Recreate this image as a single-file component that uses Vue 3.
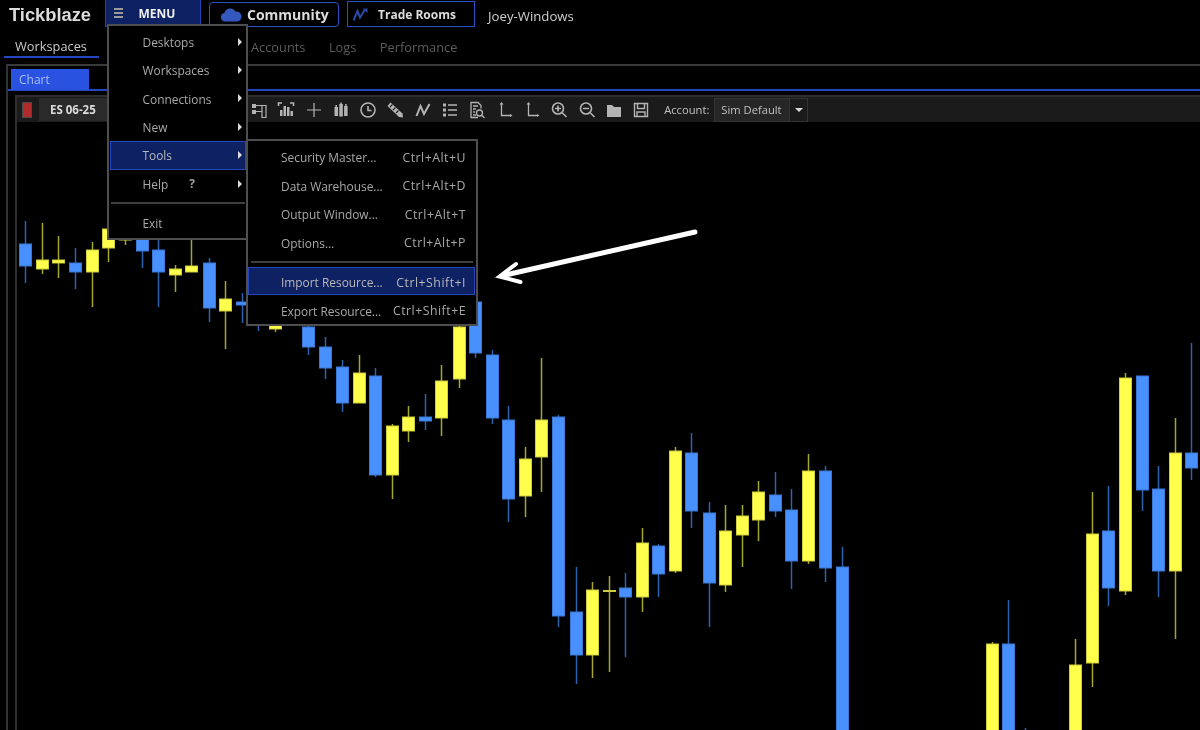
<script setup>
const B = 'b', Y = 'y'
const candles = [
  [25,221,283,244,266,B],[42,223,274,260,269,Y],[58,236,278,260,263,Y],[75,248,289,263,272,B],
  [92,242,307,250,272,Y],[108,222,262,229,248,Y],[125,220,245,225,240,Y],[142,225,268,235,251,B],
  [158,240,307,250,272,B],[175,265,292,269,275,Y],[191,238,272,266,272,Y],[209,258,322,263,308,B],
  [225,281,349,299,311,Y],[242,293,323,302,305,B],[258,300,331,310,325,B],[275,305,332,315,329,Y],
  [308,320,355,327,347,B],[325,337,379,347,368,B],[342,360,412,367,403,B],[359,355,403,373,403,Y],
  [375,368,477,376,475,B],[392,424,499,426,475,Y],[408,406,442,417,431,Y],[425,394,430,417,421,B],
  [441,365,436,381,418,Y],[459,320,388,327,379,Y],[475,295,358,302,353,B],[492,350,424,355,418,B],
  [508,406,522,420,499,B],[525,447,517,459,496,Y],[541,358,492,420,457,Y],[558,415,627,417,616,B],
  [576,567,684,612,655,B],[592,582,678,590,655,Y],[609,576,672,590.5,591.5,Y],[625,573,657,588,597,B],
  [642,528,612,543,597,Y],[658,544,597,546,574,B],[675,447,573,451,571,Y],[691,433,528,453,511,B],
  [709,502,627,513,583,B],[725,505,592,531,585,Y],[742,505,567,516,535,Y],[758,481,541,492,520,Y],
  [775,472,517,495,511,B],[791,489,589,510,561,B],[808,454,564,471,561,Y],[825,466,582,471,568,B],
  [842,547,735,567,735,B],[992,642,735,644,735,Y],[1008,600,735,644,735,B],[1025,728,735,735,735,B],
  [1075,639,735,665,735,Y],[1092,492,687,534,663,Y],[1108,486,606,531,588,B],[1125,373,595,378,591,Y],
  [1142,376,511,376,490,B],[1158,466,597,489,571,B],[1175,418,639,453,571,Y],[1191,343,480,453,468,B]
].map(([x, hi, lo, top, bottom, kind]) => ({ x, hi, lo, top, bottom, kind }))

const tools = [
  { f: 'M2 3h4v4H2zM2 9h4v4H2z', s: 'M6 4.500h10v12h-4V4.500M6 10.500h6' },
  { f: 'M3 15V9h2.500v6zM6.500 15V5h2.500v10zM10 15V6h2.500v9zM13.500 15v-5h2.500v5z', s: 'M1.500 5V2h3.500M16.500 5V2h-3.500', w: 1.6 },
  { s: 'M2 9h14M9 2v14' },
  { f: 'M2.500 6h3.500v9H2.500zM7.300 3h3.500v12.500H7.300zM12.100 5h3.500v10h-3.500z', s: 'M9 1.500v2M4.200 4v2M13.900 3v2', w: 1.5 },
  { s: 'M9 2a7 7 0 1 0 0 14a7 7 0 1 0 0-14M9 5v4.500h3.500', w: 1.6 },
  { f: 'M1.500 5l3-3.500L16.500 12.500l.5 4-4-.5z', s: 'M4 6l2.500-2.500M7 9l2.500-2.500M10 12l2.500-2.500', dark: true },
  { s: 'M2.500 15L6.500 5l3.500 8L15.500 3', w: 2 },
  { f: 'M2 2.500h3v3H2zM2 7.500h3v3H2zM2 12.500h3v3H2z', s: 'M7 4h9M7 9h9M7 14h9', w: 1.6 },
  { s: 'M10 16.500H3V1.500h7l3 3v3M5 5h5M5 8h3M5 11h2M5 14h3M14 14.500l2.500 2.500M11.500 9a3 3 0 1 0 0 6a3 3 0 1 0 0-6', w: 1.3 },
  { f: 'M3.500 3.500l2-2.500 2 2.500zM14 13l2.500 1.500-2.500 1.500z', s: 'M5.500 3v11.500h9', w: 1.3 },
  { f: 'M3.500 3.500l2-2.500 2 2.500zM14 13l2.500 1.500-2.500 1.500z', s: 'M5.500 3v11.500h9', w: 1.3 },
  { s: 'M8 2a5.500 5.500 0 1 0 0 11a5.500 5.500 0 1 0 0-11M12 11.500l4.500 4.500M5 7.500h6M8 4.500v6', w: 1.6 },
  { s: 'M8 2a5.500 5.500 0 1 0 0 11a5.500 5.500 0 1 0 0-11M12 11.500l4.500 4.500M5 7.500h6', w: 1.6 },
  { f: 'M2 4h5l2 2h7v10H2z' },
  { s: 'M2.500 2.500h13v13h-13zM5.500 2.500v5h7v-5M5 15v-4h8v4', w: 1.4 }
]

const mainMenu = [
  { label: 'Desktops' }, { label: 'Workspaces' }, { label: 'Connections' }, { label: 'New' },
  { label: 'Tools', active: true }, { label: 'Help', help: true }
]
const subTop = [
  { label: 'Security Master...', keys: 'Ctrl+Alt+U' },
  { label: 'Data Warehouse...', keys: 'Ctrl+Alt+D' },
  { label: 'Output Window...', keys: 'Ctrl+Alt+T' },
  { label: 'Options...', keys: 'Ctrl+Alt+P' }
]
const subBottom = [
  { label: 'Import Resource...', keys: 'Ctrl+Shift+I', active: true },
  { label: 'Export Resource...', keys: 'Ctrl+Shift+E' }
]
</script>

<template>
  <div class="app">
    <header class="topbar">
      <div class="logo">Tickblaze</div>
      <button class="menu-btn">
        <span class="burger"><i></i><i></i><i></i></span>
        <span>MENU</span>
      </button>
      <button class="community">
        <svg width="22" height="15" viewBox="0 0 22 15"><path d="M5 14.500a4.300 4.300 0 0 1-.6-8.500a6 6 0 0 1 11-1.500a5 5 0 0 1 2.100 10z" fill="#3558bf" /></svg>
        <span>Community</span>
      </button>
      <button class="rooms">
        <svg width="17" height="15" viewBox="0 0 17 15"><path d="M1.500 13.500L5.500 4l2.500 6.500L13 2.500" fill="none" stroke="#2a4aa8" stroke-width="2" /><path d="M11 1.500h4.500V6z" fill="#2a4aa8" /></svg>
        <span>Trade Rooms</span>
      </button>
      <div class="user">Joey-Windows</div>
    </header>

    <nav class="tabs">
      <div class="tab current">Workspaces</div>
      <div class="tab first-dim">Accounts</div>
      <div class="tab">Logs</div>
      <div class="tab">Performance</div>
    </nav>

    <main class="workspace">
      <div class="chart-tabs"><div class="chart-tab">Chart</div></div>
      <section class="window">
        <div class="toolbar">
          <span class="stop"></span>
          <span class="symbol">ES 06-25</span>
          <div class="tools">
            <svg v-for="(t, i) in tools" :key="i" class="tool" width="18" height="18" viewBox="0 0 18 18">
              <path v-if="t.f" :d="t.f" fill="#b4b4b4" />
              <path v-if="t.s" :d="t.s" fill="none" :stroke="t.dark ? '#222' : '#b4b4b4'" :stroke-width="t.w || 1.2" />
            </svg>
          </div>
          <span class="account-label">Account:</span>
          <span class="account">Sim Default</span>
          <span class="account-caret"><i></i></span>
        </div>
        <div class="chart">
          <svg class="plot" width="1183" height="608" viewBox="17 122 1183 608">
            <g v-for="(c, i) in candles" :key="i" :class="c.kind">
              <line class="wick" :x1="c.x + 0.5" :x2="c.x + 0.5" :y1="c.hi" :y2="c.lo" />
              <rect class="body" :x="c.x - 5.5" :y="c.top" width="12" :height="c.bottom - c.top" />
            </g>
            <g class="arrow">
              <path class="shaft" d="M695 232L503 275.500" />
              <path d="M516 264L499.500 276.500L520.500 282" />
            </g>
          </svg>
        </div>
      </section>
    </main>

    <div class="menu main-menu">
      <div v-for="m in mainMenu" :key="m.label" class="item" :class="{ active: m.active }">
        <span class="label">{{ m.label }}</span>
        <b v-if="m.help" class="help">?</b>
        <span class="tri"></span>
      </div>
      <div class="sep"></div>
      <div class="item exit"><span class="label">Exit</span></div>
    </div>

    <div class="menu sub-menu">
      <div v-for="m in subTop" :key="m.label" class="item">
        <span class="label">{{ m.label }}</span>
        <span class="keys">{{ m.keys }}</span>
      </div>
      <div class="sep"></div>
      <div v-for="m in subBottom" :key="m.label" class="item low" :class="{ active: m.active }">
        <span class="label">{{ m.label }}</span>
        <span class="keys">{{ m.keys }}</span>
      </div>
    </div>
  </div>
</template>

<style>
html, body { margin: 0; background: #000; overflow: hidden; }
</style>

<style scoped>
.app {
  position: relative;
  width: 1200px;
  height: 730px;
  overflow: hidden;
  background: #000;
  color: #b4b4b4;
  font-family: "Open Sans", "Noto Sans", sans-serif;
  font-size: 12px;
  display: flex;
  flex-direction: column;
  filter: blur(0.5px);
}
button { font-family: inherit; cursor: default; }

.topbar { height: 28px; display: flex; align-items: flex-start; flex: none; }
.logo { width: 105px; padding: 3px 0 0 9px; box-sizing: border-box; font-size: 18.300px; line-height: 23px; color: #dcdcdc; font-family: "Liberation Sans", sans-serif; font-weight: 700; }
.menu-btn {
  width: 96px; height: 27px; margin: 0; padding: 0 0 0 8px; box-sizing: border-box;
  display: flex; align-items: center; gap: 15.500px;
  background: #0e2163; border: 1px solid #2243b4; border-top: 0;
  color: #f0f0f0; font-size: 12px; font-weight: 700;
}
.burger { display: flex; flex-direction: column; gap: 2px; width: 9px; }
.burger i { display: block; height: 2px; background: #9a9a9a; }
.community {
  width: 130px; height: 25px; margin: 2px 0 0 8px; padding: 0 0 0 10px; box-sizing: border-box;
  display: flex; align-items: center; gap: 5px;
  background: #000; border: 1.500px solid #2a52c8; border-radius: 4px;
  color: #dcdcdc; font-size: 14px; font-weight: 700;
}
.rooms {
  width: 128px; height: 26px; margin: 1px 0 0 8px; padding: 0 0 0 4px; box-sizing: border-box;
  display: flex; align-items: center; gap: 9px;
  background: #000; border: 1.500px solid #2a52c8;
  color: #dcdcdc; font-size: 12px; font-weight: 700;
}
.user { margin: 7px 0 0 13px; font-size: 13.200px; line-height: 18px; color: #cfcfcf; }

.tabs { height: 36px; display: flex; gap: 23.500px; flex: none; color: #5c5c5c; font-size: 12.800px; }
.tab { line-height: 38px; }
.tab.current {
  width: 95px; height: 30px; margin-left: 4px; padding-left: 11px; box-sizing: border-box;
  border-bottom: 2px solid #2446c0; color: #c8c8c8; line-height: 37px;
}
.tab.first-dim { margin-left: 128.500px; }

.workspace {
  flex: 1; min-height: 0; margin-left: 6px;
  border-top: 2px solid #3a3a3a; border-left: 2px solid #333;
  display: flex; flex-direction: column;
}
.chart-tabs { height: 25px; padding: 3px 0 0 3px; box-sizing: border-box; border-bottom: 2px solid #2446c0; flex: none; }
.chart-tab { width: 78px; height: 21px; background: #2a52e0; color: #a9bdf0; font-size: 12px; line-height: 22px; padding-left: 8px; box-sizing: border-box; }
.window {
  flex: 1; min-height: 0; margin: 4px 0 0 7px;
  border-left: 2px solid #2e2e2e; border-top: 2px solid #2e2e2e;
  display: flex; flex-direction: column;
}
.toolbar { height: 25px; flex: none; background: #1b1b1b; display: flex; align-items: center; }
.stop { width: 8px; height: 14px; margin-left: 5px; background: #b02c2c; border: 1px solid #4a4a4a; flex: none; }
.symbol { width: 72px; height: 23px; margin-left: 7px; background: #2a2a2a; color: #dcdcdc; font-size: 11.500px; font-weight: 700; line-height: 23px; padding-left: 11px; box-sizing: border-box; flex: none; }
.tools { display: flex; gap: 9.300px; margin-left: 139px; flex: none; }
.tool { display: block; flex: none; }
.account-label { margin-left: 14px; color: #c0c0c0; font-size: 11.200px; flex: none; }
.account { width: 76px; height: 24px; margin-left: 5px; box-sizing: border-box; padding-left: 6px; background: #262626; border: 1px solid #333; color: #c0c0c0; font-size: 11.200px; line-height: 22px; flex: none; }
.account-caret { width: 18px; height: 24px; box-sizing: border-box; border: 1px solid #333; border-left: 0; display: flex; align-items: center; justify-content: center; flex: none; }
.account-caret i { border-left: 4px solid transparent; border-right: 4px solid transparent; border-top: 4px solid #d8d8d8; }

.chart { flex: 1; min-height: 0; position: relative; }
.plot { display: block; position: absolute; left: 0; top: 0; }
.wick { stroke-width: 1.500; }
.body { stroke-width: 1; }
.b .wick { stroke: #2c62ae; }
.b .body { fill: #4790fd; stroke: #3b78d6; }
.y .wick { stroke: #a6a62c; }
.y .body { fill: #ffff4c; stroke: #cccc3c; }
.arrow path { fill: none; stroke: #fff; stroke-width: 4; stroke-linecap: round; stroke-linejoin: miter; }
.arrow .shaft { stroke-width: 5; }

.menu { position: absolute; box-sizing: border-box; background: #000; border: 2px solid #4e4e4e; }
.main-menu { left: 106.500px; top: 24px; width: 141.500px; height: 216px; padding-top: 1.500px; }
.sub-menu { left: 246px; top: 139px; width: 232px; height: 187px; padding-top: 2px; }
.item { position: relative; height: 28.450px; display: flex; align-items: center; box-sizing: border-box; border: 1px solid transparent; color: #a8a8a8; font-size: 12px; }
.main-menu .item { padding-left: 32px; margin: 0 0 0 1px; }
.sub-menu .item { padding: 0 9px 0 32px; justify-content: space-between; }
.sub-menu .item.low { width: 227px; padding-right: 8px; padding-top: 3px; }
.label { font-size: 11.900px; }
.keys { font-size: 12.300px; letter-spacing: 0.500px; }
.item.active { background: #0e2163; border-color: #2446c0; color: #b8b8b8; }
.tri { position: absolute; left: 127px; top: 9px; border-top: 4px solid transparent; border-bottom: 4px solid transparent; border-left: 4px solid #dcdcdc; }
.help { margin-left: 21px; color: #a0a0a0; font-size: 12px; }
.sep { height: 2px; background: #3f3f3f; }
.main-menu .sep { margin: 4px 1px 5px 2px; }
.sub-menu .sep { margin: 4px 3px 4px 3px; }
</style>
